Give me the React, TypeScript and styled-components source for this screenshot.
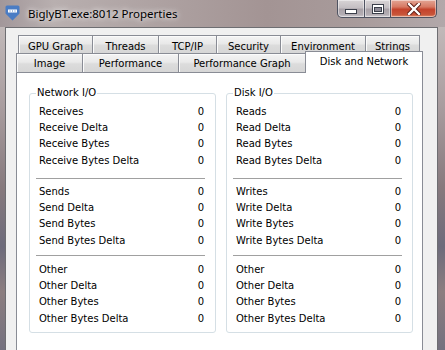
import React from 'react';
import styled, { createGlobalStyle } from 'styled-components';

const GlobalStyle = createGlobalStyle`
  html, body {
    margin: 0;
    padding: 0;
    width: 445px;
    height: 350px;
    overflow: hidden;
    background: #9d9090;
  }
  * { box-sizing: border-box; }
`;

const backTabs = [
  { label: 'GPU Graph', w: 75 },
  { label: 'Threads', w: 67 },
  { label: 'TCP/IP', w: 59 },
  { label: 'Security', w: 65 },
  { label: 'Environment', w: 86 },
  { label: 'Strings', w: 55 },
];

const frontTabs = [
  { label: 'Image', w: 67 },
  { label: 'Performance', w: 97 },
  { label: 'Performance Graph', w: 128 },
  { label: 'Disk and Network', w: 118, active: true },
];

const groups = [
  {
    title: 'Network I/O',
    sections: [
      ['Receives', 'Receive Delta', 'Receive Bytes', 'Receive Bytes Delta'],
      ['Sends', 'Send Delta', 'Send Bytes', 'Send Bytes Delta'],
      ['Other', 'Other Delta', 'Other Bytes', 'Other Bytes Delta'],
    ],
  },
  {
    title: 'Disk I/O',
    sections: [
      ['Reads', 'Read Delta', 'Read Bytes', 'Read Bytes Delta'],
      ['Writes', 'Write Delta', 'Write Bytes', 'Write Bytes Delta'],
      ['Other', 'Other Delta', 'Other Bytes', 'Other Bytes Delta'],
    ],
  },
];

// gaps around the two etched lines in each group
const sepGaps = [
  { above: 9, below: 5 },
  { above: 6, below: 6 },
];

const App = () => {
  return (
    <>
      <GlobalStyle />
      <Window>
        <TitleBar>
          <AppIcon width="15" height="16" viewBox="0 0 15 16">
            <path d="M2 0.5 H13 A1.5 1.5 0 0 1 14.5 2 V8.5 L7.5 15.5 L0.5 8.5 V2 A1.5 1.5 0 0 1 2 0.5 Z" fill="#4a7cc4" />
            <rect x="3" y="4.5" width="9" height="3" fill="#fff" />
            <rect x="4.5" y="5.5" width="1" height="1" fill="#4a7cc4" />
            <rect x="7" y="5.5" width="1" height="1" fill="#4a7cc4" />
            <rect x="9.5" y="5.5" width="1" height="1" fill="#4a7cc4" />
          </AppIcon>
          <Title>BiglyBT.exe:8012 Properties</Title>
          <Caption>
            <CaptionButton $w={28} $pos="first">
              <svg width="12" height="5" viewBox="0 0 12 5" style={{ marginTop: 6 }}>
                <rect x="0.5" y="0.5" width="11" height="4" fill="#fff" stroke="#3b3f4a" />
              </svg>
            </CaptionButton>
            <CaptionButton $w={27}>
              <svg width="12" height="10" viewBox="0 0 12 10">
                <rect x="0.5" y="0.5" width="11" height="9" fill="#fff" stroke="#3b3f4a" />
                <rect x="2.5" y="3.5" width="7" height="4" fill="#8d8a96" stroke="#3b3f4a" />
              </svg>
            </CaptionButton>
            <CaptionButton $w={47} $pos="last" $close>
              <svg width="14" height="12" viewBox="0 0 14 12">
                <path d="M2 1 L12 11 M12 1 L2 11" stroke="#5a1a12" strokeWidth="4.2" strokeLinecap="square" />
                <path d="M2 1 L12 11 M12 1 L2 11" stroke="#fff" strokeWidth="2.4" strokeLinecap="square" />
              </svg>
            </CaptionButton>
          </Caption>
        </TitleBar>
        <Body>
          <Client>
            <TabControl>
              <TabRow $back>
                {backTabs.map((t) => (
                  <Tab key={t.label} $w={t.w} $back>
                    {t.label}
                  </Tab>
                ))}
              </TabRow>
              <TabRow>
                {frontTabs.map((t) => (
                  <Tab key={t.label} $w={t.w} $active={t.active}>
                    {t.label}
                  </Tab>
                ))}
              </TabRow>
              <Panel>
                {groups.map((g) => (
                  <Group key={g.title}>
                    <Legend>{g.title}</Legend>
                    {g.sections.map((rows, i) => (
                      <React.Fragment key={i}>
                        {i > 0 && <Separator $above={sepGaps[i - 1].above} $below={sepGaps[i - 1].below} />}
                        <Section>
                          {rows.map((r) => (
                            <Row key={r}>
                              <span>{r}</span>
                              <span>0</span>
                            </Row>
                          ))}
                        </Section>
                      </React.Fragment>
                    ))}
                  </Group>
                ))}
              </Panel>
            </TabControl>
          </Client>
        </Body>
      </Window>
    </>
  );
};

export default App;

const Window = styled.div`
  width: 445px;
  height: 350px;
  display: flex;
  flex-direction: column;
  overflow: hidden;
  background: linear-gradient(90deg, #a2979a 0%, #b8afaf 12%, #aea2a2 35%, #a39494 60%, #a89b9b 80%, #b2a8aa 100%);
  font-family: "DejaVu Sans", sans-serif;
  font-size: 10px;
  color: #000;
`;

const TitleBar = styled.div`
  height: 27px;
  flex: none;
  display: flex;
  align-items: flex-start;
  padding: 0 8px 0 5px;
`;

const AppIcon = styled.svg`
  flex: none;
  margin-top: 5px;
`;

const Title = styled.div`
  margin-left: 8px;
  line-height: 27px;
  font-family: "Noto Sans", sans-serif;
  font-size: 11.5px;
  color: #000;
  text-shadow: 0 0 5px rgba(255, 255, 255, 0.9), 0 0 10px rgba(255, 255, 255, 0.6);
`;

const Caption = styled.div`
  margin-left: auto;
  display: flex;
  height: 18px;
`;

const CaptionButton = styled.div<{ $w: number; $close?: boolean; $pos?: 'first' | 'last' }>`
  width: ${(p) => p.$w}px;
  height: 18px;
  display: flex;
  align-items: center;
  justify-content: center;
  border: 1px solid #4f5361;
  border-top: none;
  margin-left: -1px;
  border-radius: ${(p) => (p.$pos === 'first' ? '0 0 0 5px' : p.$pos === 'last' ? '0 0 5px 0' : '0')};
  box-shadow: inset 0 0 0 1px rgba(255, 255, 255, 0.45);
  background: ${(p) =>
    p.$close
      ? 'linear-gradient(180deg, #e3a595 0%, #d77a64 40%, #c4432c 55%, #c85439 85%, #de8f6f 100%)'
      : 'linear-gradient(180deg, #d8d4d6 0%, #c4bfc3 45%, #a9a2a8 55%, #b3adb3 85%, #cfcbd0 100%)'};
`;

const Body = styled.div`
  flex: 1;
  min-height: 0;
  display: flex;
  padding: 0 7px 0 5px;
  background: linear-gradient(180deg, #c1b9b9 0%, #a89c9e 25%, #86797d 50%, #6d6b7b 68%, #8c7e80 82%, #74717f 100%);
`;

const Client = styled.div`
  flex: 1;
  display: flex;
  background: #f0f0f0;
  border: 1px solid #6e6e72;
  border-bottom: none;
  padding: 7px 0 0 10px;
`;

const TabControl = styled.div`
  width: 407px;
  display: flex;
  flex-direction: column;
`;

const TabRow = styled.div<{ $back?: boolean }>`
  display: flex;
  align-items: flex-end;
  height: ${(p) => (p.$back ? 18 : 19)}px;
  padding-left: ${(p) => (p.$back ? 2 : 0)}px;
  position: relative;
  z-index: ${(p) => (p.$back ? 0 : 1)};
`;

const Tab = styled.div<{ $w: number; $active?: boolean; $back?: boolean }>`
  width: ${(p) => p.$w}px;
  flex: none;
  height: ${(p) => (p.$active ? 22 : p.$back ? 18 : 19)}px;
  margin-right: -1px;
  margin-bottom: ${(p) => (p.$active ? -1 : 0)}px;
  padding-top: ${(p) => (p.$back ? 4 : 3)}px;
  line-height: 14px;
  text-align: center;
  white-space: nowrap;
  overflow: hidden;
  border: 1px solid #898c95;
  border-bottom: none;
  position: relative;
  z-index: ${(p) => (p.$active ? 2 : 0)};
  background: ${(p) =>
    p.$active ? '#fff' : 'linear-gradient(180deg, #f4f4f4 0%, #e9e9e9 45%, #dcdcdc 55%, #d6d6d6 100%)'};
  box-shadow: ${(p) => (p.$active ? 'none' : 'inset 1px 1px 0 #fbfbfb')};
`;

const Panel = styled.div`
  flex: 1;
  display: flex;
  align-items: flex-start;
  gap: 10px;
  padding: 13px 0 0 12px;
  background: #fff;
  border: 1px solid #898c95;
  border-bottom: none;
`;

const Group = styled.fieldset`
  width: 187px;
  min-width: 0;
  margin: 0;
  padding: 4px 11px 5px 9px;
  border: 1px solid #d5dfe5;
  border-radius: 3px;
`;

const Legend = styled.legend`
  margin-left: -3px;
  padding: 0 1px;
  line-height: 14px;
`;

const Section = styled.div`
  display: flex;
  flex-direction: column;

  & > div:last-child {
    margin-top: 1px;
  }
`;

const Row = styled.div`
  height: 16px;
  line-height: 16px;
  display: flex;
  justify-content: space-between;
  white-space: nowrap;
`;

const Separator = styled.div<{ $above: number; $below: number }>`
  height: 1px;
  background: #a0a0a0;
  margin: ${(p) => p.$above}px -1px ${(p) => p.$below}px -3px;
`;
